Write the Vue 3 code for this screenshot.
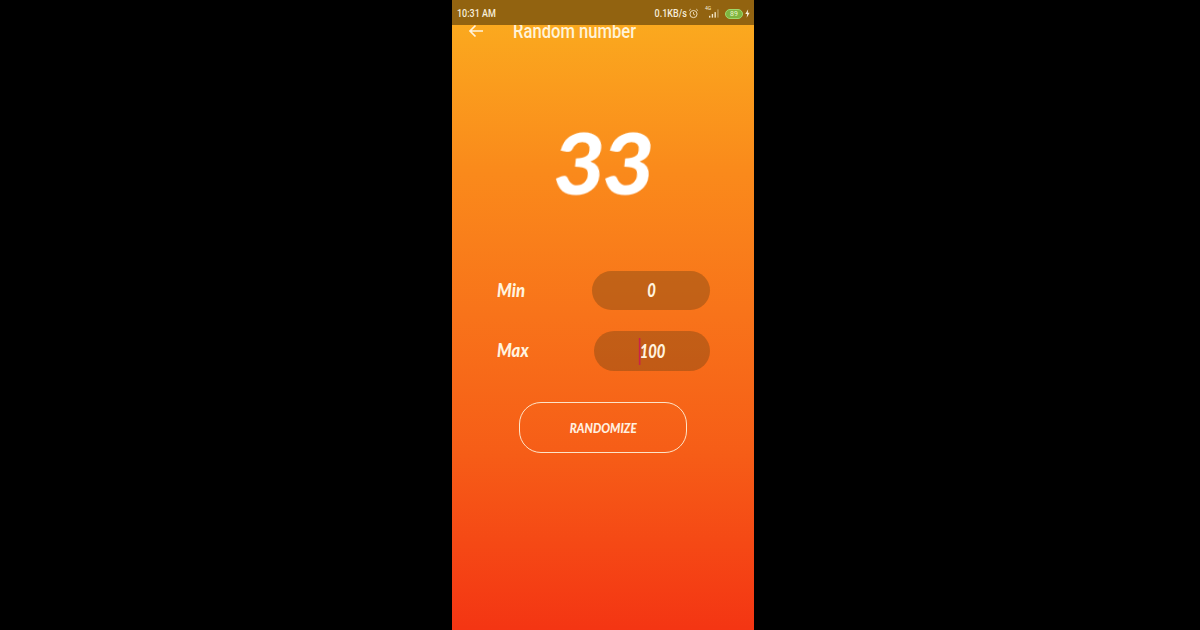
<script setup>
const fields = [
  { label: 'Min', value: '0', cls: 'min' },
  { label: 'Max', value: '100', cls: 'max', caret: true }
]
</script>

<template>
  <div class="page">
    <main class="phone">
      <header class="status">
        <span class="time">10:31 AM</span>
        <div class="indicators">
          <span class="speed">0.1KB/s</span>
          <svg class="alarm" viewBox="0 0 12 12" width="11" height="11" aria-hidden="true">
            <circle cx="6" cy="6.6" r="3.9" fill="none" stroke="#f3e6c8" stroke-width="1" />
            <path d="M6 4.4V6.8L7.6 7.6M1 3 3 1.2M11 3 9 1.2" fill="none" stroke="#f3e6c8" stroke-width="0.9" />
          </svg>
          <div class="network">
            <span class="lte">4G</span>
            <svg viewBox="0 0 12 9" width="11" height="9" aria-hidden="true">
              <rect x="0" y="7" width="1.5" height="2" fill="#f3e6c8" />
              <rect x="3" y="5" width="1.5" height="4" fill="#f3e6c8" />
              <rect x="6" y="3" width="1.5" height="6" fill="#f3e6c8" />
              <rect x="9" y="0" width="1.5" height="9" fill="#b99a5c" />
            </svg>
          </div>
          <span class="battery">89</span>
          <svg class="bolt" viewBox="0 0 6 10" width="5" height="9" aria-hidden="true">
            <path d="M3.8 0 .4 5.6H2.6L2 10 5.6 4H3.3Z" fill="#f7eeda" />
          </svg>
        </div>
      </header>

      <div class="appbar">
        <svg class="back" viewBox="0 0 16 14" width="16" height="14" aria-hidden="true">
          <path d="M15 7H2M7.5 1.5 2 7l5.5 5.5" fill="none" stroke="#fff3dc" stroke-width="1.7" />
        </svg>
        <h1>Random number</h1>
      </div>

      <div class="result">33</div>

      <section class="form">
        <div v-for="f in fields" :key="f.label" class="row" :class="f.cls">
          <span class="label">{{ f.label }}</span>
          <div class="field">
            <span class="value"><i v-if="f.caret" class="caret"></i>{{ f.value }}</span>
          </div>
        </div>
      </section>

      <button class="action" type="button"><span class="action-text">RANDOMIZE</span></button>
    </main>
  </div>
</template>

<style>
html, body { margin: 0; background: #000; }
</style>

<style scoped>
.page {
  width: 1200px;
  height: 630px;
  display: flex;
  padding-left: 452px;
  box-sizing: border-box;
  background: #000;
  overflow: hidden;
}
.phone {
  width: 302px;
  height: 630px;
  display: flex;
  flex-direction: column;
  background: linear-gradient(180deg, #fbae1f 0%, #fa8a1b 27%, #f8731a 50%, #f65d17 72%, #f43513 100%);
  font-family: Lato, "Open Sans", sans-serif;
  color: #fff;
  filter: blur(0.35px);
}
.status {
  height: 25px;
  flex: none;
  display: flex;
  align-items: center;
  justify-content: space-between;
  padding: 2px 4px 0 5px;
  box-sizing: border-box;
  background: #926310;
  color: #f7eeda;
  font-family: Roboto, sans-serif;
  font-size: 10px;
  position: relative;
  z-index: 1;
}
.time { font-weight: 500; transform: scaleX(0.9); transform-origin: left center; }
.indicators { display: flex; align-items: center; }
.speed { margin-right: 1px; font-weight: 500; transform: scaleX(0.9); transform-origin: right center; }
.alarm { margin-right: 5px; }
.network { position: relative; width: 16px; margin-right: 5px; display: flex; justify-content: flex-end; }
.lte { position: absolute; left: 1px; top: -4px; font-size: 5px; }
.battery {
  width: 16px;
  height: 8px;
  margin-right: 2px;
  border: 1px solid #9fd86c;
  border-radius: 5px;
  background: #7fb540;
  color: #e6f4c9;
  font-size: 7px;
  line-height: 8px;
  text-align: center;
}
.appbar {
  height: 25px;
  margin-top: -7px;
  display: flex;
  align-items: center;
  padding-left: 16px;
  flex: none;
}
.back { margin-right: 29px; }
h1 {
  margin: 0;
  font-family: Roboto, sans-serif;
  font-size: 20px;
  font-weight: 500;
  white-space: nowrap;
  color: #fff3d8;
  transform: scaleX(0.83);
  transform-origin: left center;
}
.result {
  margin: 74px 0 0 3px;
  height: 90px;
  flex: none;
  text-align: center;
  font-size: 85px;
  line-height: 90px;
  font-weight: 900;
  transform: skewX(-6deg);
}
.form {
  margin-top: 64px;
  padding: 0 44px 0 45px;
  display: flex;
  flex-direction: column;
  gap: 21px;
}
.row {
  display: flex;
  align-items: center;
  justify-content: space-between;
  height: 39px;
}
.row.max { height: 40px; }
.label {
  margin-bottom: 2px;
  font-size: 18px;
  font-weight: 900;
  font-style: italic;
  color: #fff3df;
  transform: scaleX(0.93);
  transform-origin: left center;
}
.field {
  height: 100%;
  border-radius: 20px;
  display: flex;
  align-items: center;
  justify-content: center;
  background: rgba(120, 70, 20, 0.42);
}
.min .field { width: 118px; }
.max .field { width: 116px; }
.value {
  position: relative;
  margin: 0 0 2px 2px;
  font-size: 19px;
  font-weight: 900;
  font-style: italic;
  color: #fff3df;
  transform: scaleX(0.78);
}
.caret {
  position: absolute;
  left: -1px;
  top: -1px;
  width: 2px;
  height: 27px;
  background: #c9234a;
}
.action {
  width: 168px;
  height: 51px;
  margin: 31px 0 0 67px;
  padding: 0;
  box-sizing: border-box;
  border: 1.4px solid #fde4c8;
  border-radius: 22px;
  background: transparent;
  color: #fff0e0;
  font-family: Lato, sans-serif;
  font-size: 13px;
  font-weight: 900;
  font-style: italic;
}
.action-text { display: inline-block; transform: scaleX(0.9); }
</style>
